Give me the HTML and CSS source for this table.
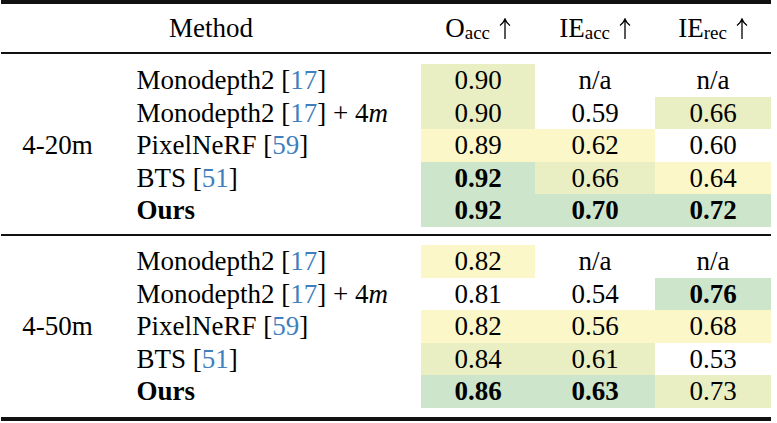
FILE: index.html
```html
<!DOCTYPE html>
<html>
<head>
<meta charset="utf-8">
<link rel="stylesheet" href="styles.css">
</head>
<body>
<div class="tbl">
  <div class="head">
    <div class="h-method">Method</div>
    <div class="h-num">O<span class="sub">acc</span> <svg class="arrow" viewBox="0 0 12 21" width="12" height="21"><path d="M6 21V1.5M1 7.5Q4.5 5 6 1Q7.5 5 11 7.5"/></svg></div>
    <div class="h-num">IE<span class="sub">acc</span> <svg class="arrow" viewBox="0 0 12 21" width="12" height="21"><path d="M6 21V1.5M1 7.5Q4.5 5 6 1Q7.5 5 11 7.5"/></svg></div>
    <div class="h-num">IE<span class="sub">rec</span> <svg class="arrow" viewBox="0 0 12 21" width="12" height="21"><path d="M6 21V1.5M1 7.5Q4.5 5 6 1Q7.5 5 11 7.5"/></svg></div>
  </div>

  <div class="section">
    <div class="range">4-20m</div>
    <div class="m">Monodepth2 [<span class="cite">17</span>]</div>
    <div class="n yg">0.90</div><div class="n">n/a</div><div class="n">n/a</div>
    <div class="m">Monodepth2 [<span class="cite">17</span>] + 4<i>m</i></div>
    <div class="n yg">0.90</div><div class="n">0.59</div><div class="n yg">0.66</div>
    <div class="m">PixelNeRF [<span class="cite">59</span>]</div>
    <div class="n y">0.89</div><div class="n y">0.62</div><div class="n">0.60</div>
    <div class="m">BTS [<span class="cite">51</span>]</div>
    <div class="n g b">0.92</div><div class="n yg">0.66</div><div class="n y">0.64</div>
    <div class="m b">Ours</div>
    <div class="n g b">0.92</div><div class="n g b">0.70</div><div class="n g b">0.72</div>
  </div>

  <div class="section second">
    <div class="range">4-50m</div>
    <div class="m">Monodepth2 [<span class="cite">17</span>]</div>
    <div class="n y">0.82</div><div class="n">n/a</div><div class="n">n/a</div>
    <div class="m">Monodepth2 [<span class="cite">17</span>] + 4<i>m</i></div>
    <div class="n">0.81</div><div class="n">0.54</div><div class="n g b">0.76</div>
    <div class="m">PixelNeRF [<span class="cite">59</span>]</div>
    <div class="n y">0.82</div><div class="n y">0.56</div><div class="n y">0.68</div>
    <div class="m">BTS [<span class="cite">51</span>]</div>
    <div class="n yg">0.84</div><div class="n yg">0.61</div><div class="n">0.53</div>
    <div class="m b">Ours</div>
    <div class="n g b">0.86</div><div class="n g b">0.63</div><div class="n yg">0.73</div>
  </div>
</div>
</body>
</html>
```

FILE: styles.css
```css
html, body {
  margin: 0;
  padding: 0;
  background: #ffffff;
}

body {
  font-family: "Liberation Serif", "Times New Roman", serif;
  font-size: 27px;
  color: #000;
}

.tbl {
  width: 770px;
  margin-left: 1px;
  border-top: 4px solid #111;
  border-bottom: 4px solid #111;
}

.head {
  display: grid;
  grid-template-columns: 420px 114px 120px 116px;
  height: 48px;
  line-height: 48px;
  border-bottom: 2px solid #111;
}

.h-method, .h-num {
  text-align: center;
  white-space: nowrap;
}

.sub {
  font-size: 19px;
  vertical-align: -2px;
  line-height: 1;
}

.arrow {
  vertical-align: -2px;
  margin-left: 2px;
  fill: none;
  stroke: #000;
  stroke-width: 1.3;
}

.section {
  display: grid;
  grid-template-columns: 115px 305px 114px 120px 116px;
  grid-auto-rows: 32.6px;
  padding: 10px 0 7px;
  line-height: 32.6px;
}

.section.second {
  border-top: 2px solid #111;
  padding: 9px 0 9px;
}

.range {
  grid-column: 1;
  grid-row: 1 / span 5;
  align-self: center;
  text-align: center;
  padding-right: 2px;
}

.m {
  grid-column: 2;
  padding-left: 20.5px;
  white-space: nowrap;
}

.n {
  text-align: center;
}

.b {
  font-weight: bold;
}

.cite {
  color: #3f7fbd;
}

.yg {
  background: #e9efc2;
}

.y {
  background: #fcf7c8;
}

.g {
  background: #cce5cb;
}
```
